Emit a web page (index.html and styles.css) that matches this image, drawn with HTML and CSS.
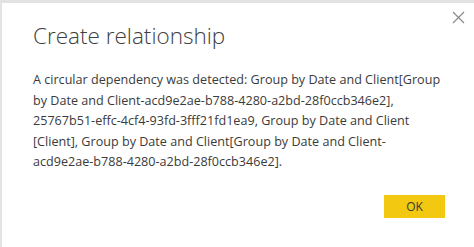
FILE: index.html
```html
<!DOCTYPE html>
<html lang="en">
<head>
    <meta charset="UTF-8">
    <meta name="viewport" content="width=device-width, initial-scale=1.0">
    <title>Create relationship</title>
    <link rel="stylesheet" href="styles.css">
</head>
<body>

    <div class="dialog">
        <button class="close-btn" aria-label="Close">
            <svg width="13" height="13" viewBox="0 0 13 13">
                <path d="M1 1 L12 12 M12 1 L1 12" stroke="#8a8a8a" stroke-width="1.2" fill="none"/>
            </svg>
        </button>

        <h1>Create relationship</h1>

        <p class="message">
            A circular dependency was detected: Group by Date and Client[Group<br>
            by Date and Client-acd9e2ae-b788-4280-a2bd-28f0ccb346e2],<br>
            25767b51-effc-4cf4-93fd-3fff21fd1ea9, Group by Date and Client<br>
            [Client], Group by Date and Client[Group by Date and Client-<br>
            acd9e2ae-b788-4280-a2bd-28f0ccb346e2].
        </p>

        <div class="dialog-actions">
            <button class="ok-btn">OK</button>
        </div>
    </div>

</body>
</html>
```

FILE: styles.css
```css
body {
    font-family: "Open Sans", "Liberation Sans", sans-serif;
    margin: 0;
    background-color: white;
}

.dialog {
    position: relative;
    height: 244px;
    border-top: 3px solid #e3e3e3;
    border-left: 2px solid #e3e3e3;
    padding: 0 31px;
}

.close-btn {
    position: absolute;
    top: 8px;
    right: 9px;
    background: none;
    border: none;
    padding: 0;
    cursor: pointer;
}

h1 {
    margin: 0;
    padding-top: 17px;
    font-size: 22.5px;
    font-weight: 300;
    line-height: 32px;
    color: #404040;
}

.message {
    margin: 18px 0 0;
    font-size: 12.6px;
    line-height: 20.5px;
    color: #3b3b3b;
    white-space: nowrap;
}

.dialog-actions {
    display: flex;
    justify-content: flex-end;
    margin-top: 22px;
}

.ok-btn {
    width: 61px;
    height: 23px;
    margin-right: -2px;
    background-color: #f2c811;
    border: none;
    font-family: inherit;
    font-size: 12px;
    color: #3a3a3a;
    cursor: pointer;
}
```
